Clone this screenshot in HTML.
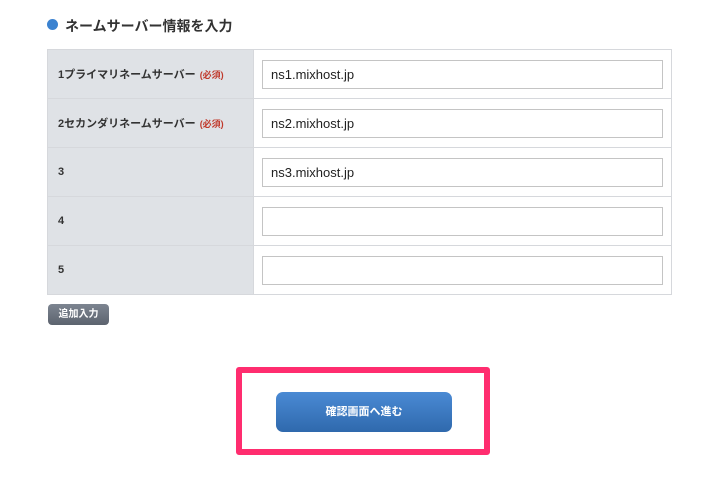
<!DOCTYPE html>
<html><head><meta charset="utf-8"><style>
*{margin:0;padding:0;box-sizing:border-box}
body{width:725px;height:478px;background:#fff;font-family:"Liberation Sans","Noto Sans CJK JP",sans-serif;position:relative;overflow:hidden}
.dot{position:absolute;left:47px;top:19px;width:11px;height:11px;border-radius:50%;background:#3b82d0}
.title{position:absolute;left:65px;top:16px;font-size:14px;font-weight:bold;color:#333}
table{position:absolute;left:47px;top:49px;width:625px;border-collapse:collapse}
td{border:1px solid #d6d8dc;height:49px;font-size:11px;color:#333}
td.l{width:206px;background:#dfe2e6;font-weight:bold;padding-left:10px}
td.l span{color:#c0392b;font-size:9px;margin-left:4px}
td.r{padding-left:8px;padding-right:8px}
.in{height:29px;border:1px solid #c4c4c4;font-size:13px;padding-left:8px;line-height:27px;color:#222}
.add{position:absolute;left:48px;top:304px;width:61px;height:21px;border-radius:4px;background:linear-gradient(#7d8591,#5c636e);color:#fff;font-size:10px;font-weight:bold;text-align:center;line-height:21px}
.pink{position:absolute;left:236px;top:367px;width:254px;height:88px;border:6px solid #ff2d6f;border-radius:3px}
.btn{position:absolute;left:276px;top:392px;width:176px;height:40px;border-radius:7px;background:linear-gradient(#4a8ad4,#2f69ad);color:#fff;font-size:11px;font-weight:bold;text-align:center;line-height:40px}
</style></head><body>
<div class="dot"></div><div class="title">ネームサーバー情報を入力</div>
<table>
<tr><td class="l">1プライマリネームサーバー<span>(必須)</span></td><td class="r"><div class="in">ns1.mixhost.jp</div></td></tr>
<tr><td class="l">2セカンダリネームサーバー<span>(必須)</span></td><td class="r"><div class="in">ns2.mixhost.jp</div></td></tr>
<tr><td class="l">3</td><td class="r"><div class="in">ns3.mixhost.jp</div></td></tr>
<tr><td class="l">4</td><td class="r"><div class="in"></div></td></tr>
<tr><td class="l">5</td><td class="r"><div class="in"></div></td></tr>
</table>
<div class="add">追加入力</div>
<div class="pink"></div>
<div class="btn">確認画面へ進む</div>
</body></html>
